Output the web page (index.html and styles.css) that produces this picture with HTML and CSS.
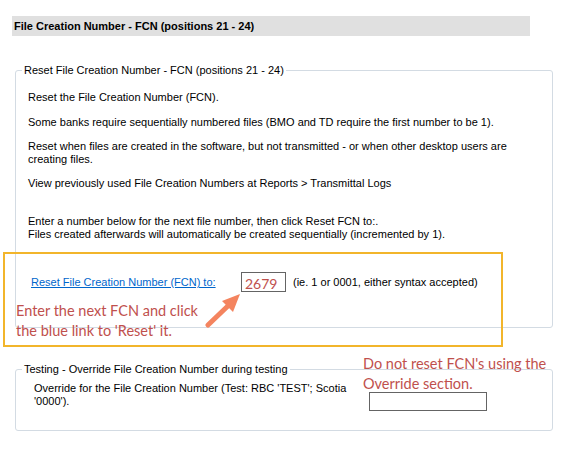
FILE: index.html
```html
<!DOCTYPE html>
<html>
<head>
<meta charset="utf-8">
<link rel="stylesheet" href="styles.css">
</head>
<body>
<div class="page">
  <div class="header">File Creation Number - FCN (positions 21 - 24)</div>

  <fieldset class="group group-reset">
    <legend>Reset File Creation Number - FCN (positions 21 - 24)</legend>
    <p class="p1">Reset the File Creation Number (FCN).</p>
    <p class="p2">Some banks require sequentially numbered files (BMO and TD require the first number to be 1).</p>
    <p class="p3">Reset when files are created in the software, but not transmitted - or when other desktop users are creating files.</p>
    <p class="p4">View previously used File Creation Numbers at Reports &gt; Transmittal Logs</p>
    <p class="p5">Enter a number below for the next file number, then click Reset FCN to:.<br>Files created afterwards will automatically be created sequentially (incremented by 1).</p>
    <div class="reset-row">
      <div class="link-cell"><a class="link" href="#">Reset File Creation Number (FCN) to:</a></div>
      <div class="fcn-box">2679</div>
      <div class="hint">(ie. 1 or 0001, either syntax accepted)</div>
    </div>
  </fieldset>

  <fieldset class="group group-test">
    <legend>Testing - Override File Creation Number during testing</legend>
    <div class="test-row">
      <div class="test-label">Override for the File Creation Number (Test: RBC 'TEST'; Scotia<br>'0000').</div>
      <div class="test-box"></div>
    </div>
  </fieldset>

  <div class="callout"></div>
  <div class="note note-reset">Enter the next FCN and click<br>the blue link to 'Reset' it.</div>
  <div class="note note-test">Do not reset FCN's using the<br>Override section.</div>
  <svg class="arrow" width="40" height="40" viewBox="0 0 40 40">
    <line x1="3" y1="35" x2="26" y2="13" stroke="#f4845f" stroke-width="5" stroke-linecap="round"/>
    <polygon points="35,4 17,11 28,22" fill="#f4845f"/>
  </svg>
</div>
</body>
</html>
```

FILE: styles.css
```css
html, body {
  margin: 0;
  padding: 0;
  background: #ffffff;
}

.page {
  position: relative;
  width: 568px;
  height: 450px;
  overflow: hidden;
  font-family: "Liberation Sans", Arial, sans-serif;
  font-size: 11px;
  color: #000000;
}

.header {
  margin: 16px 38px 0 12px;
  height: 20px;
  line-height: 20px;
  padding-left: 2px;
  background: #e0e0e0;
  font-weight: bold;
}

.group {
  margin: 0 15px;
  padding: 0;
  border: 1px solid #d3dbe3;
  border-radius: 3px;
  min-inline-size: 0;
}

.group legend {
  margin-left: 6px;
  padding: 0 2px;
  line-height: 13px;
  color: #000000;
}

.group-reset {
  margin-top: 28px;
  padding-bottom: 35px;
}

.group-reset p {
  margin: 0 32px 0 12px;
  line-height: 13px;
}

.group-reset .p1 { margin-top: 14px; }
.group-reset .p2 { margin-top: 12px; }
.group-reset .p3 { margin-top: 11px; }
.group-reset .p4 { margin-top: 11px; }
.group-reset .p5 { margin-top: 25px; }

.reset-row {
  display: flex;
  align-items: center;
  margin-top: 31px;
  margin-left: 15px;
}

.link-cell {
  width: 210px;
}

.link {
  color: #0066cc;
  text-decoration: underline;
}

.fcn-box {
  box-sizing: border-box;
  width: 45px;
  height: 20px;
  border: 1px solid #646464;
  padding: 3px 0 0 3px;
  font-family: Lato, "Open Sans", sans-serif;
  font-size: 14px;
  line-height: 16px;
  color: #c0504d;
}

.hint {
  margin-left: 7px;
}

.group-test {
  margin-top: 35px;
  padding-bottom: 19px;
}

.test-row {
  display: flex;
  align-items: flex-start;
  margin-left: 18px;
  padding-top: 6px;
}

.test-label {
  width: 335px;
  line-height: 13px;
}

.test-box {
  box-sizing: border-box;
  margin-top: 10px;
  width: 118px;
  height: 19px;
  border: 1px solid #646464;
  background: #ffffff;
}

.callout {
  position: absolute;
  left: 3px;
  top: 252px;
  width: 496px;
  height: 91px;
  border: 2px solid #f2b52b;
}

.note {
  position: absolute;
  font-family: Lato, "Open Sans", sans-serif;
  font-size: 14.5px;
  line-height: 20px;
  color: #c0504d;
  white-space: nowrap;
}

.note-reset {
  left: 16px;
  top: 301px;
}

.note-test {
  left: 363px;
  top: 354px;
}

.arrow {
  position: absolute;
  left: 205px;
  top: 290px;
}
```
